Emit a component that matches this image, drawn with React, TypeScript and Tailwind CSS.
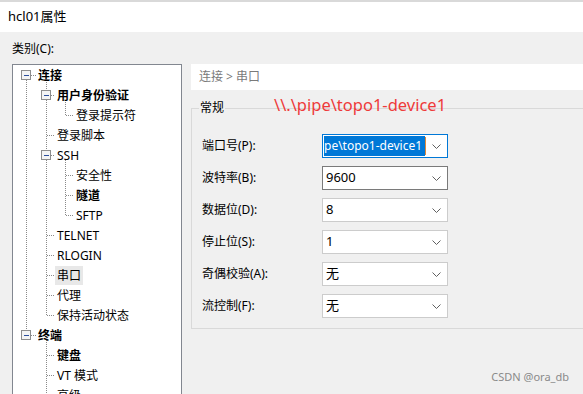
import React from 'react';

const FONT = { fontFamily: '"Noto Sans", "Noto Sans CJK SC", sans-serif' };

type Node = { label: string; level: 1 | 2 | 3; box?: boolean; bold?: boolean; selected?: boolean };

const TREE: Node[] = [
  { label: '连接', level: 1, box: true, bold: true },
  { label: '用户身份验证', level: 2, box: true, bold: true },
  { label: '登录提示符', level: 3 },
  { label: '登录脚本', level: 2 },
  { label: 'SSH', level: 2, box: true },
  { label: '安全性', level: 3 },
  { label: '隧道', level: 3, bold: true },
  { label: 'SFTP', level: 3 },
  { label: 'TELNET', level: 2 },
  { label: 'RLOGIN', level: 2 },
  { label: '串口', level: 2, selected: true },
  { label: '代理', level: 2 },
  { label: '保持活动状态', level: 2 },
  { label: '终端', level: 1, box: true, bold: true },
  { label: '键盘', level: 2, bold: true },
  { label: 'VT 模式', level: 2 },
  { label: '高级', level: 2 },
];

const FIELDS = [
  { label: '波特率(B):', value: '9600', dark: true },
  { label: '数据位(D):', value: '8' },
  { label: '停止位(S):', value: '1' },
  { label: '奇偶校验(A):', value: '无' },
  { label: '流控制(F):', value: '无' },
];

const LEVEL_X = { 1: 'pl-[23px]', 2: 'pl-[42px]', 3: 'pl-[61px]' } as const;

function Chevron() {
  return (
    <svg width="9" height="5" viewBox="0 0 9 5" className="mr-[6px] shrink-0">
      <path d="M0.5 0.5 L4.5 4.5 L8.5 0.5" fill="none" stroke="#606060" strokeWidth="1" />
    </svg>
  );
}

function TreeLines() {
  const cy = (i: number) => 10 + 20 * i;
  const box = (x: number, i: number) => (
    <g key={`b${x}-${i}`}>
      <rect x={x - 4.5} y={cy(i) - 4.5} width="9" height="9" fill="#f4f4f4" stroke="#8d8d8d" />
      <line x1={x - 2} y1={cy(i) + 0.5} x2={x + 3} y2={cy(i) + 0.5} stroke="#2c4f9e" strokeWidth="1" />
    </g>
  );
  const dot = { stroke: '#8a8a8a', strokeDasharray: '1 1', strokeWidth: 1 };
  const h = (x1: number, x2: number, i: number) => (
    <line key={`h${x1}-${i}`} x1={x1} y1={cy(i) + 0.5} x2={x2} y2={cy(i) + 0.5} {...dot} />
  );
  const v = (x: number, y1: number, y2: number) => (
    <line key={`v${x}-${y1}`} x1={x + 0.5} y1={y1} x2={x + 0.5} y2={y2} {...dot} />
  );
  return (
    <svg className="absolute inset-0 pointer-events-none" width="168" height="340">
      {v(13, cy(0) + 5, cy(13) - 5)}
      {v(33, cy(0) + 5, cy(12) + 1)}
      {v(33, cy(13) + 5, 340)}
      {v(52, cy(1) + 5, cy(2) + 1)}
      {v(52, cy(4) + 5, cy(7) + 1)}
      {h(18, 23, 0)}
      {h(18, 23, 13)}
      {[1, 4].map((i) => h(38, 42, i))}
      {[3, 8, 9, 10, 11, 12, 14, 15, 16].map((i) => h(34, 42, i))}
      {[2, 5, 6, 7].map((i) => h(53, 61, i))}
      {box(13, 0)}
      {box(13, 13)}
      {box(33, 1)}
      {box(33, 4)}
    </svg>
  );
}

export default function App() {
  return (
    <div className="w-[583px] h-[394px] overflow-hidden flex flex-col bg-[#f0f0f0] text-black relative" style={FONT}>
      {/* title bar */}
      <div className="h-[2px] bg-[#d9d9d9]" />
      <div className="h-[30px] bg-white flex items-center pl-[8px] text-[13px]">hcl01属性</div>

      <div className="flex-1 flex flex-col pl-[12px] pt-[9px] min-h-0">
        <div className="h-[16px] leading-[16px] text-[12px]">类别(C):</div>

        <div className="flex gap-[9px] mt-[7px] flex-1 min-h-0">
          {/* category tree */}
          <div className="w-[170px] shrink-0 bg-white border border-[#828790] border-b-0 relative overflow-hidden">
            <TreeLines />
            <div className="relative flex flex-col text-[12px]">
              {TREE.map((n) => (
                <div key={n.label} className={`h-[20px] flex items-center ${LEVEL_X[n.level]}`}>
                  <span
                    className={`px-[2px] leading-[19px] ${n.bold ? 'font-bold' : ''} ${n.selected ? 'bg-[#e8e8e8]' : ''}`}
                  >
                    {n.label}
                  </span>
                </div>
              ))}
            </div>
          </div>

          {/* right panel */}
          <div className="flex-1 min-w-0 flex flex-col overflow-hidden">
            <div className="h-[26px] bg-white flex items-center pl-[8px] text-[12px] text-[#7a7a7a]">连接 &gt; 串口</div>

            <div className="relative mt-[18px] w-[420px] h-[221px] border border-[#d9d9d9] pl-[10px] pt-[25px] flex flex-col gap-[8px]">
              <div className="absolute -top-[9px] left-[7px] px-[1px] bg-[#f0f0f0] text-[12px] leading-[16px]">常规</div>

              <div className="flex items-center h-[24px] text-[12px]">
                <div className="w-[120px]">端口号(P):</div>
                <div className="w-[126px] h-[24px] bg-white border border-[#0078d7] flex items-center">
                  <div className="ml-[1px] h-[20px] w-[101px] bg-[#0078d7] text-white flex items-center overflow-hidden whitespace-nowrap text-[12px]">
                    pe\topo1-device1
                  </div>
                  <div className="w-[1px] h-[18px] bg-[#e08a3c]" />
                  <div className="flex-1" />
                  <Chevron />
                </div>
              </div>

              {FIELDS.map((f) => (
                <div key={f.label} className="flex items-center h-[24px] text-[12px]">
                  <div className="w-[120px]">{f.label}</div>
                  <div
                    className={`w-[126px] h-[24px] bg-white border flex items-center pl-[3px] ${f.dark ? 'border-[#7a7a7a]' : 'border-[#cccccc]'}`}
                  >
                    <span className="flex-1 text-[13px]">{f.value}</span>
                    <Chevron />
                  </div>
                </div>
              ))}
            </div>
          </div>
        </div>
      </div>

      {/* annotation */}
      <div className="absolute left-[274px] top-[95px] text-[16.5px] leading-[20px] text-[#ee3a3a]">\\.\pipe\topo1-device1</div>

      <div className="absolute right-[14px] bottom-[9px] text-[11px] text-[#8a8a8a]">CSDN @ora_db</div>
    </div>
  );
}
